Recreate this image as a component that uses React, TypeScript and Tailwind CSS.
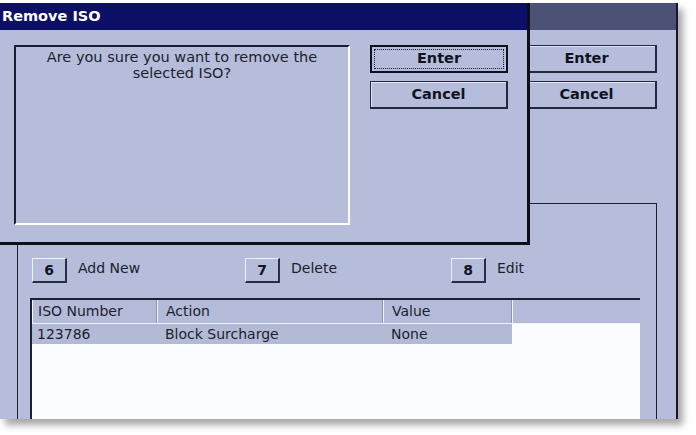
import React from 'react';

const face = "font-['DejaVu_Sans',sans-serif]";

function Button({ label, focused, className }: { label: string; focused?: boolean; className?: string }) {
  if (focused) {
    return (
      <div className={`h-[28px] border-2 border-[#0d0f1c] p-[2px] ${className ?? ''}`}>
        <div className="h-full border border-dotted border-[#1b1e30] flex items-center justify-center text-[14.5px] font-bold text-[#101322]">
          {label}
        </div>
      </div>
    );
  }
  return (
    <div
      className={`h-[28px] border border-[#25293f] border-r-2 border-b-2 shadow-[inset_1px_1px_0_#dfe3f3] flex items-center justify-center text-[14.5px] font-bold text-[#101322] ${className ?? ''}`}
    >
      {label}
    </div>
  );
}

function KeyItem({ num, label, width }: { num: string; label: string; width?: string }) {
  return (
    <div className={`flex items-start gap-[11px] ${width ?? ''}`}>
      <div className="w-[35px] h-[25px] border-t border-l border-[#eef0fa] border-r-2 border-b-2 border-r-[#2a2e44] border-b-[#2a2e44] flex items-center justify-center text-[14px] font-bold text-[#111425]">
        {num}
      </div>
      <span className="text-[14px] leading-[18px] text-[#1a1d2c] mt-[1px]">{label}</span>
    </div>
  );
}

const cols = [
  { title: 'ISO Number', value: '123786', w: 'w-[125px]', pad: 'pl-[5px]' },
  { title: 'Action', value: 'Block Surcharge', w: 'w-[226px]', pad: 'pl-[8px]' },
  { title: 'Value', value: 'None', w: 'w-[129px]', pad: 'pl-[8px]' },
];

export default function App() {
  return (
    <div className={`w-[696px] h-[435px] bg-white pt-[3px] overflow-hidden ${face}`}>
      <div className="relative w-[678px] h-[416px] bg-[#b5bdda] border-r-2 border-[#15182a] shadow-[5px_6px_7px_rgba(0,0,0,0.35)] flex flex-col">
        {/* main window behind */}
        <div className="h-[27px] shrink-0 bg-[#4b5275]" />
        <div className="flex flex-col items-end pr-[19px] pt-[15px] gap-[8px]">
          <Button label="Enter" className="w-[140px]" />
          <Button label="Cancel" className="w-[140px]" />
        </div>

        <div className="ml-[17px] mt-[94px] w-[640px] flex-1 min-h-0 border border-b-0 border-[#1b1e2e] flex flex-col overflow-hidden">
          <div className="flex pl-[14px] pt-[54px]">
            <KeyItem num="6" label="Add New" width="w-[213px]" />
            <KeyItem num="7" label="Delete" width="w-[206px]" />
            <KeyItem num="8" label="Edit" />
          </div>

          <div className="ml-[12px] mt-[15px] w-[610px] flex-1 border-t-2 border-l-2 border-[#1d2033] bg-[#fbfcff] flex flex-col">
            <div className="flex h-[24px] bg-[#b3bbd8] border-b border-[#eef0fa]">
              {cols.map((c) => (
                <div
                  key={c.title}
                  className={`${c.w} ${c.pad} h-full flex items-center border-l border-[#f3f4fb] border-r border-r-[#8d94b3] text-[14px] text-[#1b1e2e]`}
                >
                  {c.title}
                </div>
              ))}
              <div className="flex-1 border-l border-[#f3f4fb]" />
            </div>
            <div className="flex h-[20px]">
              {cols.map((c) => (
                <div key={c.title} className={`${c.w} ${c.pad} h-full flex items-center bg-[#b3bad6] text-[14px] text-[#1b1e2e]`}>
                  {c.value}
                </div>
              ))}
            </div>
          </div>
        </div>

        {/* Remove ISO dialog on top */}
        <div className="absolute left-0 top-0 w-[530px] h-[242px] bg-[#b5bdda] border-r-[3px] border-b-[3px] border-[#0c0e1a] flex flex-col">
          <div className="h-[27px] shrink-0 bg-[#0b1066] flex items-center pl-[2px] text-[14.5px] font-bold text-white">
            Remove ISO
          </div>
          <div className="flex pl-[14px] pt-[15px] gap-[20px]">
            <div className="w-[336px] h-[180px] border-t-2 border-l-2 border-[#1a1d33] border-r-2 border-b-2 border-r-white border-b-white pt-[2px] text-center text-[14.5px] leading-[16px] text-[#1b1e2e]">
              Are you sure you want to remove the
              <br />
              selected ISO?
            </div>
            <div className="flex flex-col gap-[8px]">
              <Button label="Enter" focused className="w-[138px]" />
              <Button label="Cancel" className="w-[138px]" />
            </div>
          </div>
        </div>
      </div>
    </div>
  );
}
